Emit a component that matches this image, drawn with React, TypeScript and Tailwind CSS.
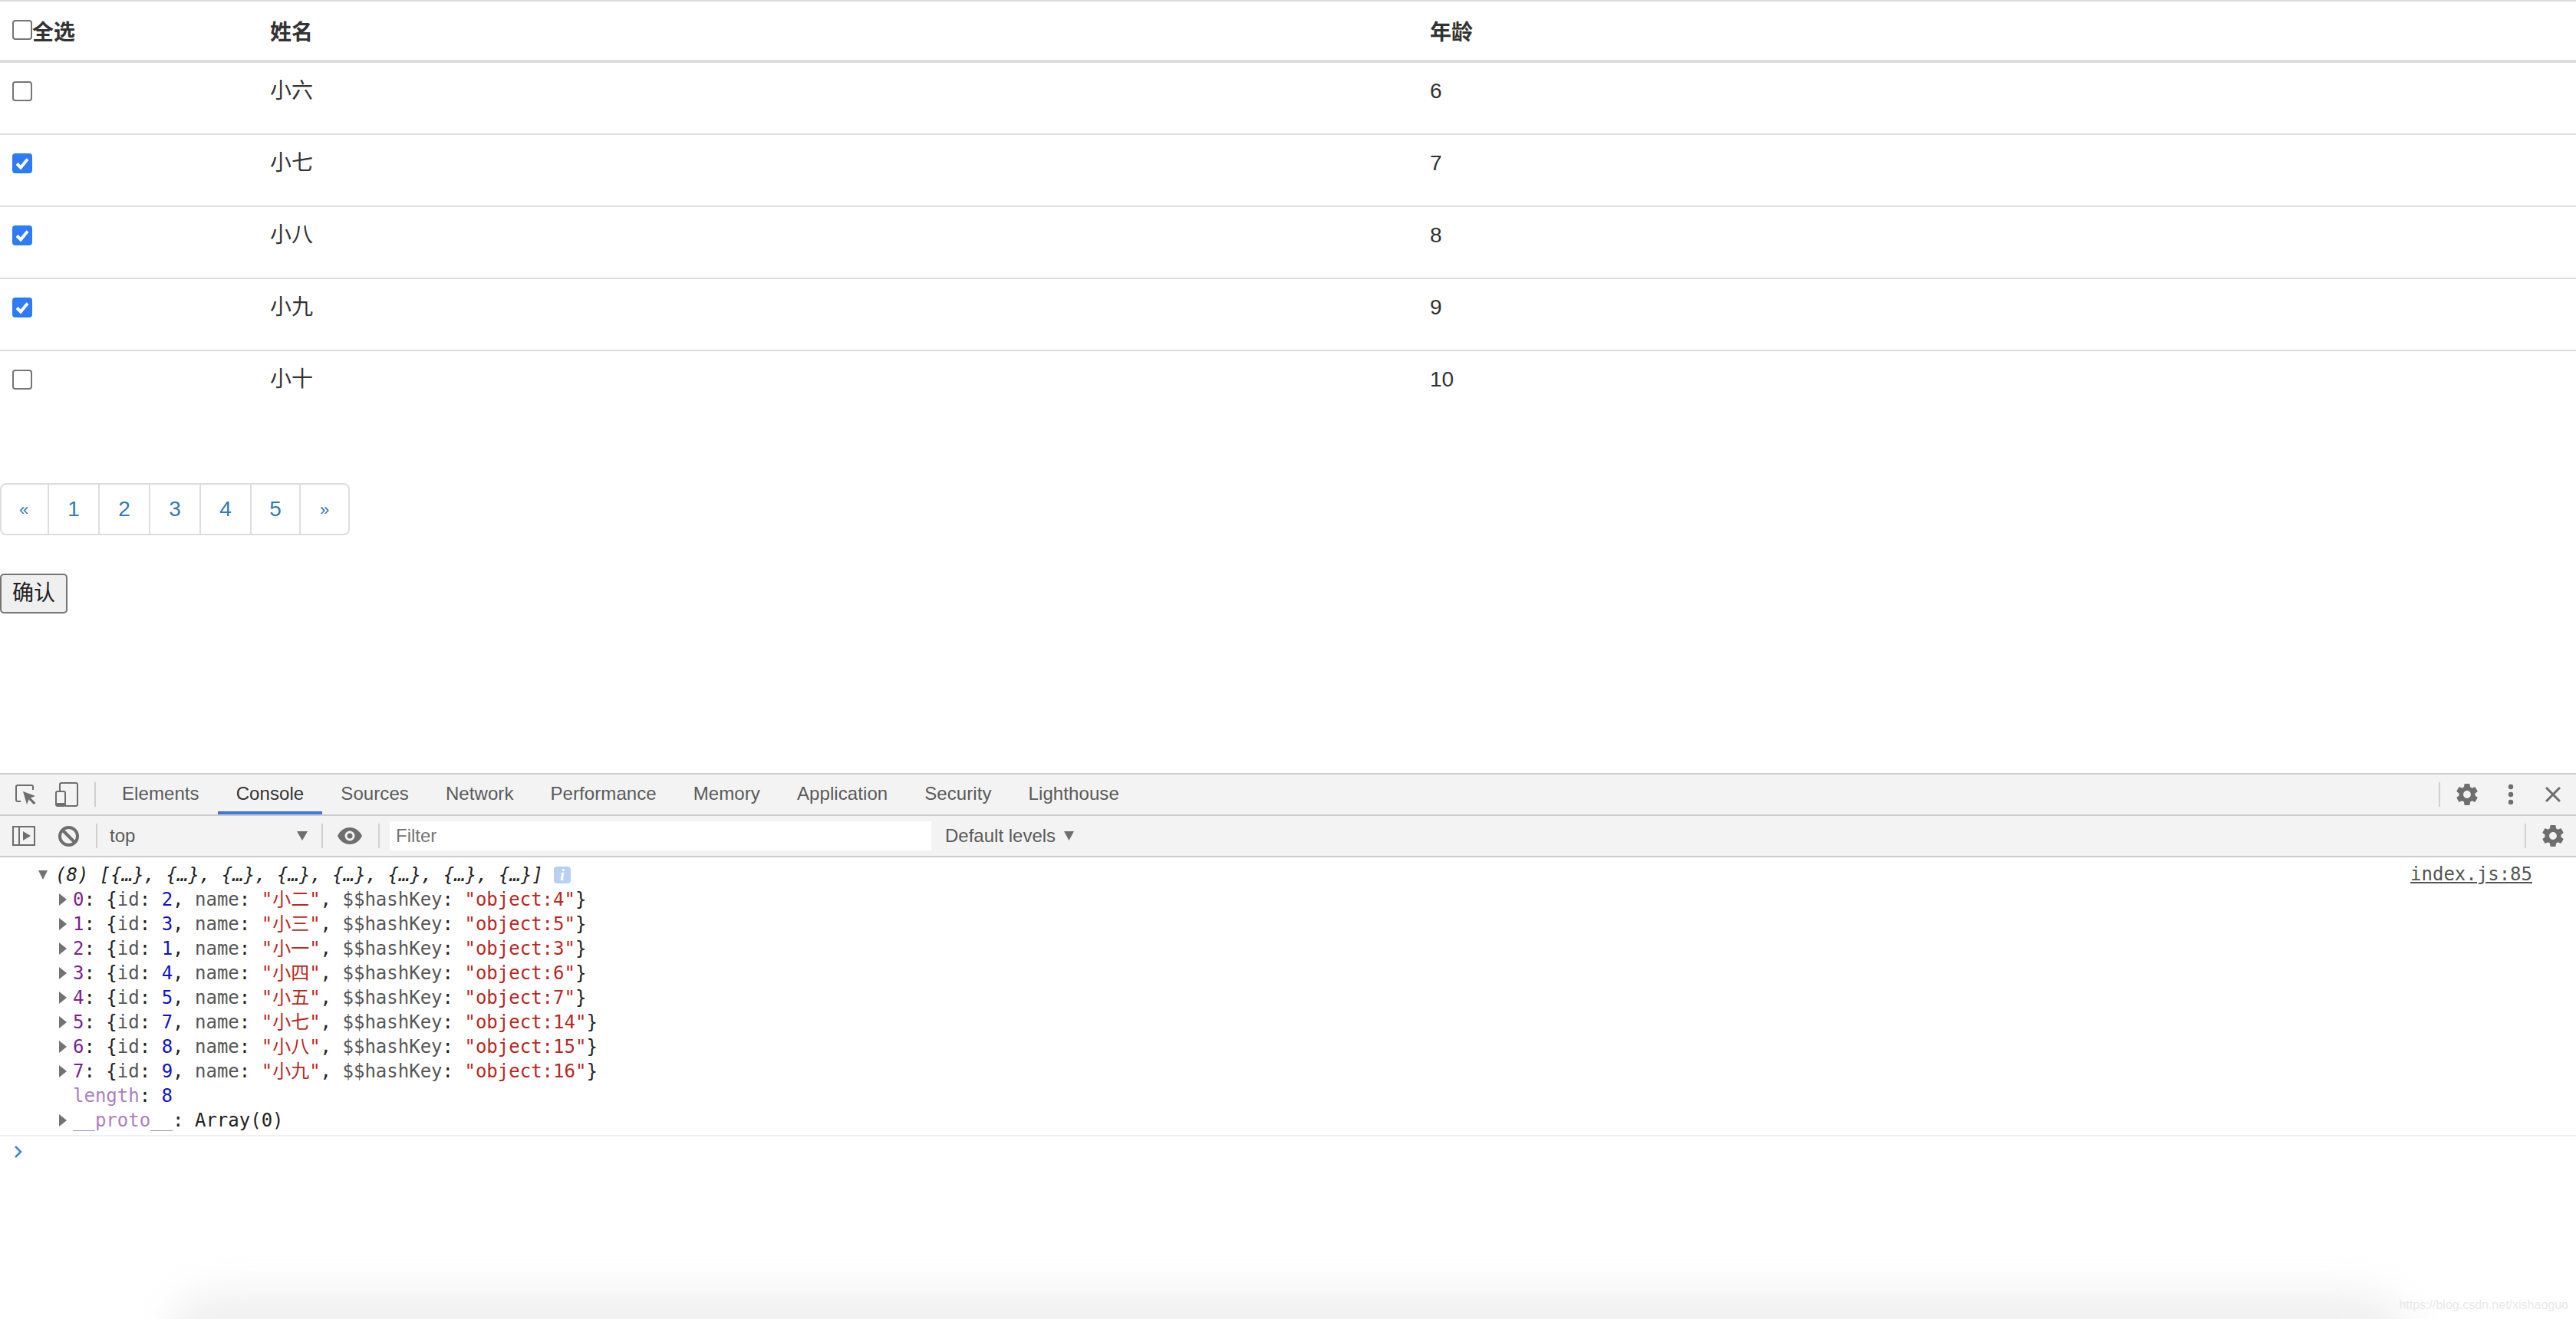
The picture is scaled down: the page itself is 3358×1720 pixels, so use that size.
const people = [
  { name: '小六', age: 6, checked: false },
  { name: '小七', age: 7, checked: true },
  { name: '小八', age: 8, checked: true },
  { name: '小九', age: 9, checked: true },
  { name: '小十', age: 10, checked: false },
];

const logRows = [
  { id: 2, name: '小二', key: 'object:4' },
  { id: 3, name: '小三', key: 'object:5' },
  { id: 1, name: '小一', key: 'object:3' },
  { id: 4, name: '小四', key: 'object:6' },
  { id: 5, name: '小五', key: 'object:7' },
  { id: 7, name: '小七', key: 'object:14' },
  { id: 8, name: '小八', key: 'object:15' },
  { id: 9, name: '小九', key: 'object:16' },
];

const tabs = ['Elements', 'Console', 'Sources', 'Network', 'Performance', 'Memory', 'Application', 'Security', 'Lighthouse'];

const pages = [
  { label: '«', width: 'w-[62px] -ml-[2px] text-[22px]' },
  { label: '1', width: 'w-[66px] border-l-2' },
  { label: '2', width: 'w-[66px] border-l-2' },
  { label: '3', width: 'w-[66px] border-l-2' },
  { label: '4', width: 'w-[66px] border-l-2' },
  { label: '5', width: 'w-[64px] border-l-2' },
  { label: '»', width: 'w-[64px] border-l-2 text-[22px]' },
];

const Divider = ({ className }: { className: string }) => (
  <div className={`h-[32px] w-[2px] flex-none bg-[#cfcfcf] ${className}`} />
);

const Arrow = ({ open }: { open?: boolean }) => (
  <svg width="12" height="16" viewBox="0 0 12 16" className="flex-none">
    {open ? <path d="M0 2h12L6 14z" fill="#727272" /> : <path d="M1 0l10 8L1 16z" fill="#727272" />}
  </svg>
);

const Gear = ({ className }: { className: string }) => (
  <svg width="28" height="28" viewBox="2 2 20 20" fill="#6e6e6e" className={`flex-none ${className}`}>
    <path d="M19.43 12.98c.04-.32.07-.64.07-.98s-.03-.66-.07-.98l2.11-1.65c.19-.15.24-.42.12-.64l-2-3.46c-.12-.22-.39-.3-.61-.22l-2.49 1c-.52-.4-1.08-.73-1.69-.98l-.38-2.65C14.46 2.18 14.25 2 14 2h-4c-.25 0-.46.18-.49.42l-.38 2.65c-.61.25-1.17.59-1.69.98l-2.49-1c-.23-.09-.49 0-.61.22l-2 3.46c-.13.22-.07.49.12.64l2.11 1.65c-.04.32-.07.65-.07.98s.03.66.07.98l-2.11 1.65c-.19.15-.24.42-.12.64l2 3.46c.12.22.39.3.61.22l2.49-1c.52.4 1.08.73 1.69.98l.38 2.65c.03.24.24.42.49.42h4c.25 0 .46-.18.49-.42l.38-2.65c.61-.25 1.17-.59 1.69-.98l2.49 1c.23.09.49 0 .61-.22l2-3.46c.12-.22.07-.49-.12-.64l-2.11-1.65zM12 15.5c-1.93 0-3.5-1.57-3.5-3.5s1.57-3.5 3.5-3.5 3.5 1.57 3.5 3.5-1.57 3.5-3.5 3.5z" />
  </svg>
);

const Check = ({ checked }: { checked?: boolean }) => (
  <span className="relative block h-[26px] w-[26px] flex-none">
    <input
      type="checkbox"
      defaultChecked={checked}
      className="m-0 block h-[26px] w-[26px] appearance-none rounded-[4px] border-2 border-[#767676] bg-white checked:border-[#2d7bf6] checked:bg-[#2d7bf6]"
    />
    {checked && (
      <svg width="26" height="26" viewBox="0 0 26 26" fill="none" className="absolute left-0 top-0">
        <path d="M6 13.5l5 5L20 7.5" stroke="white" strokeWidth="4" />
      </svg>
    )}
  </span>
);

const App = () => {
  return (
    <div className="relative h-[1720px] w-[3358px] overflow-hidden bg-white font-['Liberation_Sans','Noto_Sans_CJK_SC',sans-serif] text-[28px] text-[#333]">
      <div className="h-[1008px]">
        {/* Table */}
        <div className="grid h-[82px] grid-cols-[336px_1512px_1fr] border-t-2 border-b-4 border-[#ddd] font-bold">
          <div className="flex items-start pl-4 pt-6">
            <Check />
            <span className="-mt-[3px] leading-[40px]">全选</span>
          </div>
          <div className="pl-4 pt-[21px] leading-[40px]">姓名</div>
          <div className="pl-4 pt-[21px] leading-[40px]">年龄</div>
        </div>
        {people.map((p, i) => (
          <div
            key={p.name}
            className={`grid h-[94px] grid-cols-[336px_1512px_1fr] ${i < 4 ? 'border-b-2 border-[#ddd]' : ''}`}
          >
            <div className="pl-4 pt-6">
              <Check checked={p.checked} />
            </div>
            <div className="pl-4 pt-[17px] leading-[40px]">{p.name}</div>
            <div className="pl-4 pt-[17px] leading-[40px]">{p.age}</div>
          </div>
        ))}

        {/* Pagination */}
        <div className="mt-[78px] flex h-[68px] w-[456px] rounded-lg border-2 border-[#ddd] text-[#337ab7]">
          {pages.map((page) => (
            <div key={page.label} className={`flex flex-none items-center justify-center border-[#ddd] ${page.width}`}>
              {page.label}
            </div>
          ))}
        </div>

        <button className="mt-[50px] flex h-[52px] w-[88px] items-center justify-center rounded-[5px] border-2 border-[#767676] bg-[#efefef] text-[28px] text-[#222]">
          确认
        </button>
      </div>

      {/* DevTools */}
      <div className="flex h-[56px] items-center border-y-2 border-[#cdcdcd] bg-[#f3f3f3] text-[24px] tracking-[0.08px] text-[#5a5a5a]">
        <svg width="27" height="26" viewBox="0 0 27 26" fill="none" className="ml-[20px] flex-none">
          <path d="M7 22H3a2 2 0 0 1-2-2V3a2 2 0 0 1 2-2h18a2 2 0 0 1 2 2v4" stroke="#6e6e6e" strokeWidth="2" />
          <path d="M10 9l16 6-6 2.5 6.5 6.5-2.5 2-6.500-6.500L15 26z" fill="#6e6e6e" />
        </svg>
        <svg width="30" height="32" viewBox="0 0 30 32" fill="none" className="ml-[25px] flex-none">
          <path d="M6 11V3a2 2 0 0 1 2-2h19a2 2 0 0 1 2 2v26a2 2 0 0 1-2 2H13" stroke="#6e6e6e" strokeWidth="2" />
          <rect x="1" y="12" width="12" height="19" rx="2" stroke="#6e6e6e" strokeWidth="2" />
          <rect x="1" y="27" width="12" height="4" fill="#6e6e6e" />
        </svg>
        <Divider className="ml-[21px]" />
        <div className="ml-[10px] flex">
          {tabs.map((t) => (
            <div
              key={t}
              className={`flex h-[52px] items-center px-[24px] ${t === 'Console' ? 'border-b-[4px] border-[#3a78e0] pt-[2px] text-[#333]' : 'pb-[2px]'}`}
            >
              {t}
            </div>
          ))}
        </div>
        <Divider className="ml-auto" />
        <Gear className="ml-[21px]" />
        <svg width="8" height="28" viewBox="0 0 8 28" className="ml-[39px] flex-none">
          <circle cx="4" cy="4" r="3.200" fill="#6e6e6e" />
          <circle cx="4" cy="14" r="3.200" fill="#6e6e6e" />
          <circle cx="4" cy="24" r="3.200" fill="#6e6e6e" />
        </svg>
        <svg width="20" height="20" viewBox="0 0 20 20" className="ml-[41px] mr-[20px] flex-none">
          <path d="M1 1l18 18M19 1L1 19" stroke="#6e6e6e" strokeWidth="3" />
        </svg>
      </div>
      <div className="flex h-[54px] items-center border-b-2 border-[#cdcdcd] bg-[#f3f3f3] text-[24px] text-[#5a5a5a]">
        <svg width="30" height="26" viewBox="0 0 30 26" fill="none" className="ml-[16px] flex-none">
          <rect x="1" y="1" width="28" height="24" stroke="#6e6e6e" strokeWidth="2" />
          <path d="M9 1v24" stroke="#6e6e6e" strokeWidth="2" />
          <path d="M14 7l10 6-10 6z" fill="#6e6e6e" />
        </svg>
        <svg width="27" height="27" viewBox="0 0 27 27" fill="none" className="ml-[30px] flex-none">
          <circle cx="13.500" cy="13.500" r="11.500" stroke="#6e6e6e" strokeWidth="4" />
          <path d="M5.500 5.500l16 16" stroke="#6e6e6e" strokeWidth="4" />
        </svg>
        <Divider className="ml-[22px]" />
        <span className="ml-[16px] w-[244px]">top</span>
        <svg width="14" height="12" viewBox="0 0 14 12" className="flex-none">
          <path d="M0 0h14L7 12z" fill="#6e6e6e" />
        </svg>
        <Divider className="ml-[18px]" />
        <svg width="32" height="22" viewBox="0 0 32 22" className="ml-[19px] flex-none">
          <path
            fillRule="evenodd"
            d="M16 0c7 0 13 4.500 16 11-3 6.500-9 11-16 11S3 17.500 0 11C3 4.500 9 0 16 0zm0 4.500a6.500 6.500 0 1 0 0 13 6.500 6.500 0 0 0 0-13zm0 3a3.500 3.500 0 1 1 0 7 3.500 3.500 0 0 1 0-7z"
            fill="#6e6e6e"
          />
        </svg>
        <Divider className="ml-[21px]" />
        <div className="ml-[13px] flex h-[38px] w-[706px] flex-none items-center bg-white pl-[8px] text-[#757575]">Filter</div>
        <span className="ml-[18px]">Default levels</span>
        <svg width="13" height="12" viewBox="0 0 13 12" className="ml-[11px] flex-none">
          <path d="M0 0h13L6.500 12z" fill="#6e6e6e" />
        </svg>
        <Divider className="ml-auto" />
        <Gear className="ml-[21px] mr-[16px]" />
      </div>

      {/* Console output */}
      <div className="font-['DejaVu_Sans_Mono','Noto_Sans_CJK_SC',monospace] text-[24px] leading-[32px] text-[#222]">
        <div className="flex h-[364px] flex-col border-b-2 border-[#f0f0f0] pt-[7px]">
          <div className="flex h-[32px] items-center">
            <div className="ml-[50px] w-[22px]">
              <Arrow open />
            </div>
            <span className="italic">(8) [{'{…}'}, {'{…}'}, {'{…}'}, {'{…}'}, {'{…}'}, {'{…}'}, {'{…}'}, {'{…}'}]</span>
            <span className="ml-[14px] flex h-[22px] w-[22px] items-center justify-center rounded-[4px] bg-[#b9d0f5] font-['Liberation_Serif',serif] text-[20px] font-bold italic text-white">
              i
            </span>
            <span className="-mt-[2px] ml-auto mr-[57px] text-[#555] underline">index.js:85</span>
          </div>
          {logRows.map((row, i) => (
            <div key={row.id} className="flex h-[32px] items-center whitespace-pre pl-[76px]">
              <div className="w-[19px]">
                <Arrow />
              </div>
              <span className="text-[#7f1f8f]">{i}</span>
              <span>: {'{'}</span>
              <span className="text-[#565656]">id</span>
              <span>: </span>
              <span className="text-[#1111cc]">{row.id}</span>
              <span>, </span>
              <span className="text-[#565656]">name</span>
              <span>: </span>
              <span className="text-[#b9281e]">"{row.name}"</span>
              <span>, </span>
              <span className="text-[#565656]">$$hashKey</span>
              <span>: </span>
              <span className="text-[#b9281e]">"{row.key}"</span>
              <span>{'}'}</span>
            </div>
          ))}
          <div className="flex h-[32px] items-center whitespace-pre pl-[95px]">
            <span className="text-[#ad7fc0]">length</span>
            <span>: </span>
            <span className="text-[#1111cc]">8</span>
          </div>
          <div className="flex h-[32px] items-center whitespace-pre pl-[76px]">
            <div className="w-[19px]">
              <Arrow />
            </div>
            <span className="text-[#ad7fc0]">__proto__</span>
            <span>: Array(0)</span>
          </div>
        </div>
        <div className="pl-[18px] pt-[12px]">
          <svg width="12" height="16" viewBox="0 0 12 16" fill="none">
            <path d="M2 1l7 7-7 7" stroke="#3f7df0" strokeWidth="2.500" />
          </svg>
        </div>
      </div>

      {/* Watermark fade */}
      <div className="absolute -bottom-[85px] left-[220px] h-[120px] w-[2920px] rounded-full bg-[#f0f0f0] blur-[25px]" />
      <span className="absolute bottom-[8px] right-[10px] text-[16px] leading-[20px] text-[#e8e8e8]">https://blog.csdn.net/xishaoguo</span>
    </div>
  );
};

export default App;
